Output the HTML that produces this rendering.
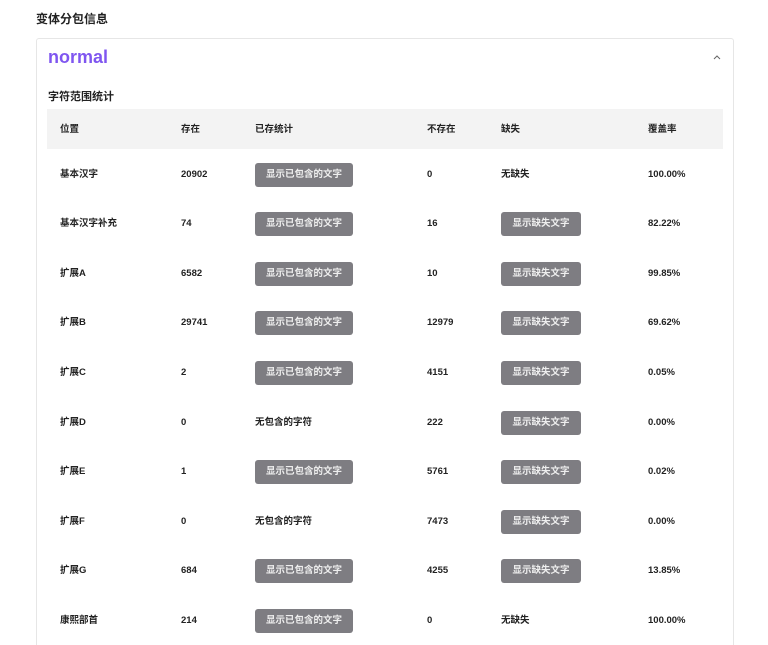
<!DOCTYPE html><html style="overflow:hidden;height:645px"><head><style>
body{margin:0;background:#fff;font-family:"Liberation Sans","Noto Sans CJK SC",sans-serif;color:#222;width:768px;height:645px;overflow:hidden;position:relative}
.t{position:absolute;left:36px;top:10px;font-size:12px;font-weight:bold}
.card{position:absolute;left:36px;top:38px;width:696px;height:630px;border:1px solid #e6e6e6;border-radius:3px}
.n{position:absolute;left:11px;top:8px;font-size:18px;font-weight:bold;color:#7f56f0}
.ch{position:absolute;right:12px;top:16px}
.s{position:absolute;left:11px;top:49px;font-size:11px;font-weight:bold}
.hd{position:absolute;left:10px;top:70px;width:676px;height:40px;background:#f3f3f3}
.c{position:absolute;font-size:9.5px;font-weight:bold;line-height:12px}
.b{position:absolute;height:24px;background:#7e7d82;color:#eee;border-radius:3px;font-size:9.5px;font-weight:bold;line-height:24px;text-align:center}
</style></head><body>
<div class="t">变体分包信息</div>
<div class="card"><div class="n">normal</div><svg class="ch" width="8" height="5" viewBox="0 0 8 5"><path d="M1 4L4 1L7 4" fill="none" stroke="#666" stroke-width="1"/></svg><div class="s">字符范围统计</div><div class="hd"></div></div>
<div id="g"></div>
<script>
var X=[60,181,255,427,501,648];
var H=["位置","存在","已存统计","不存在","缺失","覆盖率"];
var R=[["基本汉字","20902",1,"0",0,"100.00%"],["基本汉字补充","74",1,"16",1,"82.22%"],["扩展A","6582",1,"10",1,"99.85%"],["扩展B","29741",1,"12979",1,"69.62%"],["扩展C","2",1,"4151",1,"0.05%"],["扩展D","0",0,"222",1,"0.00%"],["扩展E","1",1,"5761",1,"0.02%"],["扩展F","0",0,"7473",1,"0.00%"],["扩展G","684",1,"4255",1,"13.85%"],["康熙部首","214",1,"0",0,"100.00%"]];
var h="";
H.forEach(function(t,i){h+='<div class="c" style="left:'+X[i]+'px;top:124px">'+t+'</div>'});
R.forEach(function(r,j){var y=174.5+j*49.6;
h+='<div class="c" style="left:60px;top:'+(y-6)+'px">'+r[0]+'</div>';
h+='<div class="c" style="left:181px;top:'+(y-6)+'px">'+r[1]+'</div>';
h+=r[2]?'<div class="b" style="left:255px;width:98px;top:'+(y-12)+'px">显示已包含的文字</div>':'<div class="c" style="left:255px;top:'+(y-6)+'px">无包含的字符</div>';
h+='<div class="c" style="left:427px;top:'+(y-6)+'px">'+r[3]+'</div>';
h+=r[4]?'<div class="b" style="left:501px;width:80px;top:'+(y-12)+'px">显示缺失文字</div>':'<div class="c" style="left:501px;top:'+(y-6)+'px">无缺失</div>';
h+='<div class="c" style="left:648px;top:'+(y-6)+'px">'+r[5]+'</div>';});
document.getElementById("g").innerHTML=h;
</script>
</body></html>
